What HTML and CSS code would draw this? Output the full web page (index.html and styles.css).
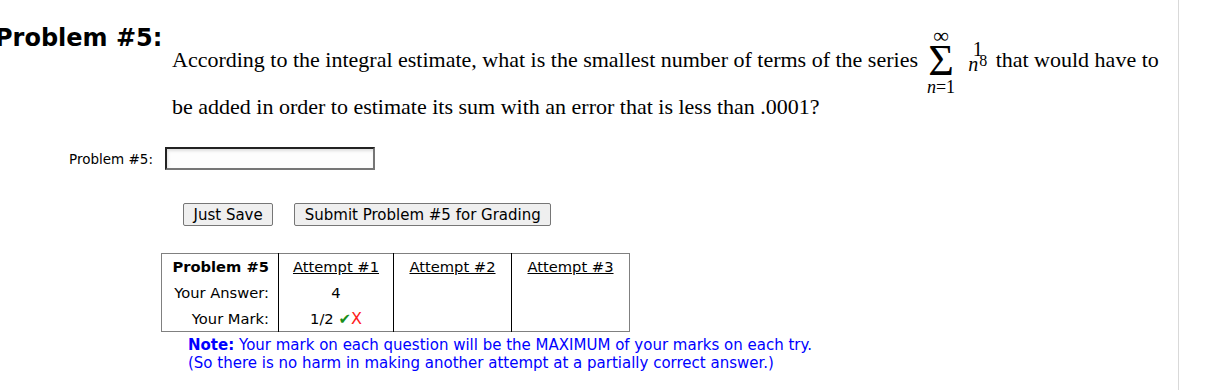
FILE: index.html
```html
<!DOCTYPE html>
<html>
<head>
<meta charset="utf-8">
<link rel="stylesheet" href="styles.css">
</head>
<body>
<div class="page">
  <div class="problem">
    <h3 class="title">Problem #5:</h3>
    <div class="question">
      According to the integral estimate, what is the smallest number of terms of the series<span class="sum"><span class="lim-top">∞</span><span class="sigma">Σ</span><span class="lim-bot"><i>n</i>=1</span></span><span class="frac"><span class="num">1</span><span class="den"><i>n</i><sup>8</sup></span></span> that would have to be added in order to estimate its sum with an error that is less than .0001?
    </div>
  </div>

  <div class="answer-row">
    <label class="answer-label">Problem #5:</label>
    <input class="answer-input" type="text">
  </div>

  <div class="buttons">
    <button class="btn">Just Save</button>
    <button class="btn">Submit Problem #5 for Grading</button>
  </div>

  <table class="attempts">
    <colgroup>
      <col class="c1"><col class="c2"><col class="c3"><col class="c4">
    </colgroup>
    <tr class="head">
      <th class="rowhead">Problem #5</th>
      <td><a href="#">Attempt #1</a></td>
      <td><a href="#">Attempt #2</a></td>
      <td><a href="#">Attempt #3</a></td>
    </tr>
    <tr>
      <td class="rowhead">Your Answer:</td>
      <td>4</td>
      <td></td>
      <td></td>
    </tr>
    <tr>
      <td class="rowhead">Your Mark:</td>
      <td>1/2 <span class="check">✔</span><span class="cross">X</span></td>
      <td></td>
      <td></td>
    </tr>
  </table>

  <div class="note">
    <b>Note:</b> Your mark on each question will be the MAXIMUM of your marks on each try.<br>
    (So there is no harm in making another attempt at a partially correct answer.)
  </div>
</div>
</body>
</html>
```

FILE: styles.css
```css
html, body {
  margin: 0;
  padding: 0;
  background: #ffffff;
}

body {
  font-family: "DejaVu Sans", Verdana, sans-serif;
  color: #000;
}

.page {
  width: 1179px;
  height: 390px;
  border-right: 1px solid #d9d9d9;
  box-sizing: border-box;
  overflow: hidden;
}

.problem {
  display: grid;
  grid-template-columns: 172px 1fr;
}

.title {
  grid-column: 1;
  grid-row: 1;
  margin: 24px 0 0 -5px;
  font-size: 24px;
  font-weight: bold;
  white-space: nowrap;
  line-height: normal;
}

.question {
  grid-column: 2;
  grid-row: 1;
  padding-top: 36px;
  padding-right: 10px;
  font-family: "Liberation Serif", "Times New Roman", serif;
  font-size: 22px;
  line-height: 47px;
}

.sum {
  display: inline-flex;
  flex-direction: column;
  align-items: center;
  vertical-align: 24px;
  margin: -9px 0 -14px 9px;
}

.lim-top {
  font-size: 22px;
  line-height: 14px;
}

.sigma {
  font-size: 44px;
  line-height: 27px;
  margin-top: 4px;
}

.lim-bot {
  font-size: 18px;
  line-height: 17px;
  margin-top: 5px;
}

.frac {
  display: inline-flex;
  flex-direction: column;
  align-items: center;
  vertical-align: 11px;
  margin-left: 13px;
  margin-right: 3px;
}

.num {
  font-size: 20px;
  line-height: 15px;
}

.den {
  font-size: 20px;
  line-height: 15px;
}

.den sup {
  font-size: 16px;
  vertical-align: 5px;
  line-height: 0;
  margin-left: 1px;
}

.answer-row {
  display: flex;
  align-items: center;
  margin-top: 17px;
}

.answer-label {
  width: 153px;
  text-align: right;
  font-size: 13.5px;
  margin-right: 12px;
}

.answer-input {
  width: 210px;
  height: 23px;
  box-sizing: border-box;
  border-style: solid;
  border-width: 2px;
  border-color: #222 #767676 #767676 #222;
  box-shadow: inset 1px 2px 3px rgba(0,0,0,0.12);
  background: #fdfdfd;
  padding: 0;
  margin: 0;
}

.buttons {
  display: flex;
  gap: 21px;
  margin: 33px 0 0 183px;
}

.btn {
  font-family: "DejaVu Sans", Verdana, sans-serif;
  font-size: 15px;
  height: 23px;
  padding: 0 9.5px;
  background: #efefef;
  border: 1px solid #767676;
  border-radius: 2px;
  color: #000;
}

.attempts {
  margin: 27px 0 0 161px;
  width: 469px;
  table-layout: fixed;
  border-collapse: collapse;
  border: 1px solid #808080;
  font-size: 14.7px;
}

.attempts .c1 { width: 117px; }
.attempts .c2 { width: 115px; }
.attempts .c3 { width: 118px; }
.attempts .c4 { width: 118px; }

.attempts th,
.attempts td {
  height: 26px;
  padding: 0;
  text-align: center;
  border-left: 1px solid #000;
  white-space: nowrap;
}

.attempts .head th,
.attempts .head td {
  height: 25px;
}

.attempts .rowhead {
  text-align: right;
  border-left: none;
  padding-right: 9px;
}

.attempts th.rowhead {
  font-weight: bold;
}

.attempts a {
  color: #000;
  text-decoration: underline;
}

.check {
  color: #1a8f1a;
  font-size: 15px;
}

.cross {
  color: #ff1a1a;
  font-size: 16px;
}

.note {
  margin: 4px 0 0 188px;
  color: #0000ff;
  font-size: 15px;
  line-height: 18px;
}
```
